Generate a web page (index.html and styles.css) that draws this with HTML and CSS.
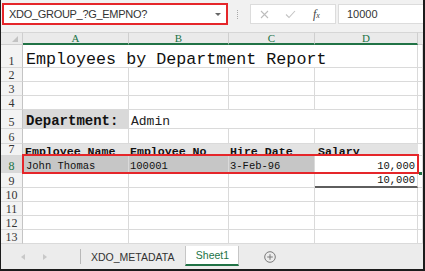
FILE: index.html
```html
<!DOCTYPE html>
<html>
    <head>
        <title>Employees by Department Report</title>
        <link rel="stylesheet" href="styles.css">
    </head>
    <body>
        <div class="window">
            <div class="formula-bar">
                <div class="name-box">
                    <span class="name-text">XDO_GROUP_?G_EMPNO?</span>
                    <span class="drop"></span>
                </div>
                <span class="grip"></span>
                <div class="fx-box">
                    <svg class="ico-x" width="9" height="9" viewBox="0 0 9 9"><path d="M1 1L8 8M8 1L1 8" stroke="#bdbdbd" stroke-width="1.1" fill="none"/></svg>
                    <svg class="ico-ok" width="11" height="9" viewBox="0 0 11 9"><path d="M1 4.5L4 7.5L10 1" stroke="#c4c4c4" stroke-width="1.1" fill="none"/></svg>
                    <span class="fx">f<span class="fx-sub">x</span></span>
                </div>
                <div class="formula-input">10000</div>
            </div>

            <div class="sheet">
                <div class="corner"><span class="tri"></span></div>
                <div class="colhead">A</div>
                <div class="colhead">B</div>
                <div class="colhead">C</div>
                <div class="colhead">D</div>
                <div class="colhead blank"></div>

                <div class="rh">1</div>
                <div class="c title span4">Employees by Department Report</div>
                <div class="c"></div>

                <div class="rh">2</div>
                <div class="c"></div><div class="c"></div><div class="c"></div><div class="c"></div><div class="c"></div>
                <div class="rh">3</div>
                <div class="c"></div><div class="c"></div><div class="c"></div><div class="c"></div><div class="c"></div>
                <div class="rh">4</div>
                <div class="c"></div><div class="c"></div><div class="c"></div><div class="c"></div><div class="c"></div>

                <div class="rh">5</div>
                <div class="c dept-label">Department:</div>
                <div class="c dept-name span3">Admin</div>
                <div class="c"></div>

                <div class="rh">6</div>
                <div class="c"></div><div class="c"></div><div class="c"></div><div class="c"></div><div class="c"></div>

                <div class="rh">7</div>
                <div class="c head first">Employee Name</div>
                <div class="c head">Employee No</div>
                <div class="c head">Hire Date</div>
                <div class="c head last">Salary</div>
                <div class="c"></div>

                <div class="rh selected">8</div>
                <div class="c data sel first">John Thomas</div>
                <div class="c data sel">100001</div>
                <div class="c data sel">3-Feb-96</div>
                <div class="c data num">10,000</div>
                <div class="c"></div>

                <div class="rh">9</div>
                <div class="c"></div><div class="c"></div><div class="c"></div>
                <div class="c data num total">10,000</div>
                <div class="c"></div>

                <div class="rh">10</div>
                <div class="c"></div><div class="c"></div><div class="c"></div><div class="c"></div><div class="c"></div>
                <div class="rh">11</div>
                <div class="c"></div><div class="c"></div><div class="c"></div><div class="c"></div><div class="c"></div>
                <div class="rh">12</div>
                <div class="c"></div><div class="c"></div><div class="c"></div><div class="c"></div><div class="c"></div>
                <div class="rh">13</div>
                <div class="c"></div><div class="c"></div><div class="c"></div><div class="c"></div><div class="c"></div>

                <div class="mark"></div>
                <div class="handle"></div>
            </div>

            <div class="tabs">
                <span class="arrow left"></span>
                <span class="arrow right"></span>
                <span class="tab-sep"></span>
                <span class="tab">XDO_METADATA</span>
                <span class="tab active">Sheet1</span>
                <svg class="add" width="12" height="12" viewBox="0 0 12 12"><circle cx="6" cy="6" r="5.3" stroke="#7a7a7a" fill="none"/><path d="M6 3.2V8.8M3.2 6H8.8" stroke="#7a7a7a"/></svg>
            </div>
        </div>
    </body>
</html>
```

FILE: styles.css
```css
body{
    margin: 0;
    background-color: white;
}
.window{
    width: 425px;
    height: 271px;
    box-sizing: border-box;
    border-left: 1px solid #1c1c1c;
    border-right: 2px solid #1c1c1c;
    border-bottom: 2px solid #1c1c1c;
    background-color: #f1f1f1;

    display: flex;
    flex-direction: column;
}

/* formula bar */
.formula-bar{
    height: 32px;
    box-sizing: border-box;
    padding-top: 3px;
    padding-left: 1px;

    display: flex;
    flex-direction: row;
    align-items: flex-start;

    font-family: "Liberation Sans", Arial, sans-serif;
    font-size: 11px;
    color: #333;
}
.name-box{
    width: 226px;
    height: 22px;
    box-sizing: border-box;
    border: 2px solid #e5262a;
    background-color: white;
    padding-left: 5px;

    display: flex;
    align-items: center;
}
.name-text{
    letter-spacing: -0.3px;
}
.drop{
    margin-left: auto;
    margin-right: 5px;
    width: 0;
    height: 0;
    border-left: 3px solid transparent;
    border-right: 3px solid transparent;
    border-top: 3px solid #666;
}
.grip{
    margin-left: 9px;
    margin-top: 7px;
    height: 9px;
    border-left: 1px dotted #a8a8a8;
}
.fx-box{
    margin-left: 12px;
    margin-top: 1px;
    width: 86px;
    height: 20px;
    box-sizing: border-box;
    border: 1px solid #dcdcdc;
    background-color: white;

    display: flex;
    align-items: center;
}
.ico-x{
    margin-left: 9px;
}
.ico-ok{
    margin-left: 16px;
}
.fx{
    margin-left: 17px;
    font-family: "Liberation Serif", serif;
    font-style: italic;
    font-size: 12px;
    color: #444;
}
.fx-sub{
    font-size: 8px;
}
.formula-input{
    margin-left: 2px;
    margin-top: 1px;
    flex: 1;
    height: 20px;
    box-sizing: border-box;
    border: 1px solid #dcdcdc;
    border-right: none;
    background-color: white;
    padding-left: 8px;

    display: flex;
    align-items: center;
}

/* sheet grid */
.sheet{
    position: relative;
    display: grid;
    grid-template-columns: 22px 106px 100px 86px 103px 5px;
    grid-template-rows: 13px 23px 14px 14px 14px 19px 15px 12px 17px 15px 14px 14px 14px 14px;
    background-color: white;
}
.corner{
    background-color: #eaeaea;
    border-top: 1px solid #d6d6d6;
    border-right: 1px solid #cfcfcf;
    border-bottom: 1px solid #cfcfcf;

    display: flex;
    align-items: flex-end;
    justify-content: flex-end;
    padding: 0 4px 2px 0;
}
.tri{
    width: 0;
    height: 0;
    border-left: 6px solid transparent;
    border-bottom: 6px solid #c2c2c2;
}
.colhead{
    background-color: #eaeaea;
    border-top: 1px solid #d6d6d6;
    border-right: 1px solid #cfcfcf;
    border-bottom: 2px solid #217346;

    display: flex;
    align-items: center;
    justify-content: center;

    font-family: "Liberation Serif", serif;
    font-size: 11px;
    line-height: 11px;
    color: #217346;
}
.colhead.blank{
    border-bottom: 1px solid #cfcfcf;
    border-right: none;
}
.rh{
    background-color: #f3f3f3;
    border-right: 1px solid #c4c4c4;
    border-bottom: 1px solid #d8d8d8;
    overflow: hidden;

    display: flex;
    align-items: flex-end;
    justify-content: center;

    font-family: "Liberation Serif", serif;
    font-size: 12px;
    line-height: 11px;
    color: #333;
}
.rh.selected{
    background-color: #d9d9d9;
    color: #217346;
}
.c{
    border-right: 1px solid #dadada;
    border-bottom: 1px solid #dadada;
    overflow: hidden;
    white-space: nowrap;

    display: flex;
    align-items: flex-end;

    font-family: "Liberation Mono", "Courier New", monospace;
    color: #111;
}
.span4{
    grid-column: span 4;
}
.span3{
    grid-column: span 3;
}
.title{
    font-size: 16.7px;
    line-height: 14px;
    padding-left: 3px;
}
.dept-label{
    background-color: #d9d9d9;
    border-right-color: #d9d9d9;
    font-size: 14px;
    line-height: 14px;
    font-weight: bold;
    padding-left: 3px;
}
.dept-name{
    font-size: 13px;
    line-height: 13px;
    padding-left: 2px;
    color: #222;
}
.head{
    background-color: #e3e3e3;
    border-right-color: #e3e3e3;
    border-bottom: none;
    align-items: flex-start;
    font-size: 11.6px;
    font-weight: bold;
    line-height: 12px;
    padding-top: 2px;
    padding-left: 1px;
}
.head.first{
    padding-left: 2px;
}
.head.last{
    padding-left: 3px;
}
.data{
    font-size: 10.5px;
    line-height: 12px;
    padding-left: 1px;
}
.data.first{
    padding-left: 3px;
}
.sel{
    background-color: #c6c6c6;
}
.num{
    justify-content: flex-end;
    padding-right: 2px;
}
.total{
    border-bottom: 2px solid #5e5e5e;
}
.mark{
    position: absolute;
    left: 21px;
    top: 122px;
    width: 397px;
    height: 20px;
    box-sizing: border-box;
    border: 2px solid #e5262a;
}
.handle{
    position: absolute;
    left: 418px;
    top: 140px;
    width: 3px;
    height: 3px;
    background-color: #217346;
}

/* sheet tabs */
.tabs{
    flex: 1;
    background-color: #ececec;

    display: flex;
    align-items: center;

    font-family: "Liberation Sans", Arial, sans-serif;
    font-size: 10.5px;
    color: #333;
}
.arrow{
    width: 0;
    height: 0;
    border-top: 3px solid transparent;
    border-bottom: 3px solid transparent;
}
.arrow.left{
    margin-left: 20px;
    border-right: 4px solid #c8c8c8;
}
.arrow.right{
    margin-left: 18px;
    border-left: 4px solid #c8c8c8;
}
.tab-sep{
    margin-left: 33px;
    height: 15px;
    border-left: 1px solid #b8b8b8;
}
.tab{
    padding: 0 11px 0 10px;
}
.tab.active{
    align-self: stretch;
    margin: 2px 0 3px;
    width: 54px;
    box-sizing: border-box;
    padding: 0;
    background-color: white;
    border-left: 1px solid #c6c6c6;
    border-right: 1px solid #c6c6c6;
    border-bottom: 2px solid #217346;
    color: #217346;

    display: flex;
    align-items: center;
    justify-content: center;
}
.add{
    margin-left: 25px;
}
```
